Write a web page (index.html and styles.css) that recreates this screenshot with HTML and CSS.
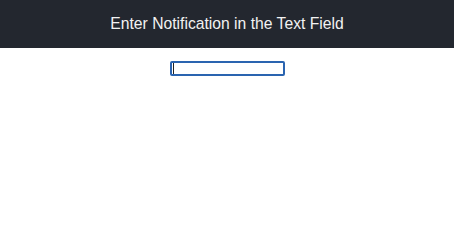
FILE: index.html
```html
<!DOCTYPE html>
<html>
<head>
<meta charset="utf-8">
<link rel="stylesheet" href="styles.css">
</head>
<body>
<header class="bar"><h1 class="title">Enter Notification in the Text Field</h1></header>
<main class="content">
<span class="field-wrap"><input class="field" type="text" autofocus><span class="caret"></span></span>
</main>
</body>
</html>
```
FILE: styles.css
```css
html, body {
  margin: 0;
  padding: 0;
  background: #ffffff;
  font-family: "Liberation Sans", Arial, sans-serif;
}
.bar {
  height: 48px;
  background: #23272f;
  display: flex;
  align-items: center;
  justify-content: center;
}
.title {
  margin: 0;
  color: #f2f2f2;
  font-weight: normal;
  font-size: 15.7px;
  letter-spacing: 0;
}
.content {
  display: flex;
  justify-content: center;
  padding-top: 13px;
}
.field-wrap {
  position: relative;
  display: block;
  width: 115px;
  height: 15px;
}
.field {
  display: block;
  box-sizing: border-box;
  width: 115px;
  height: 15px;
  margin: 0;
  padding: 0 1px;
  border: 2px solid #2a64b0;
  border-radius: 2px;
  outline: none;
  background: #fff;
  font-size: 11px;
  caret-color: transparent;
}
.caret {
  position: absolute;
  left: 3px;
  top: 2px;
  width: 1px;
  height: 11px;
  background: #222;
}
```
